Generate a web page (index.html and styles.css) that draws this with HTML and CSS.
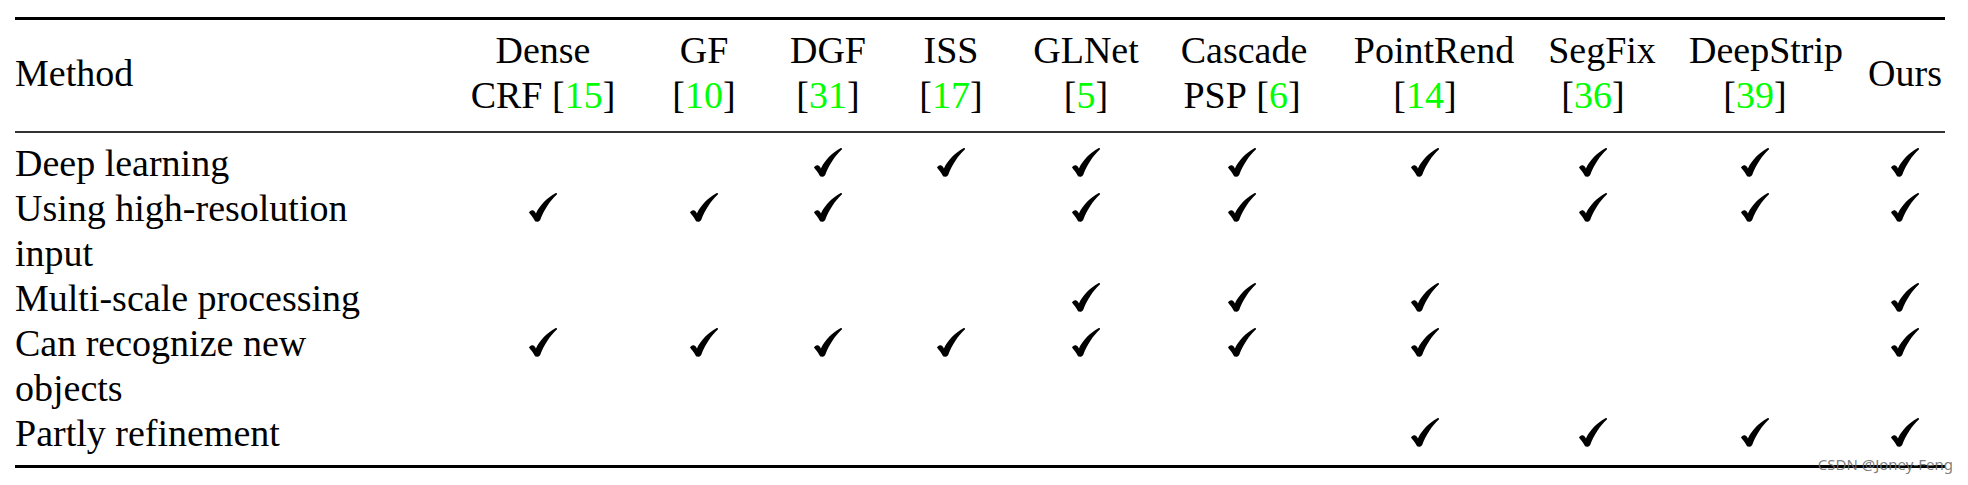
FILE: index.html
```html
<!DOCTYPE html>
<html>
<head>
<meta charset="utf-8">
<link rel="stylesheet" href="styles.css">
</head>
<body>
<svg width="0" height="0" class="defs">
  <defs>
    <path id="ck" d="M0 19.6 C1 16.8 4.4 16.2 6 18.8 L6.9 20.4 C11 12.5 17.5 5.2 26.8 0.1 C27.8 -0.3 28.4 0.8 27.8 1.5 C21 8 15.2 16.5 11.4 26.4 C10.4 29 6.8 29.6 5.6 27.6 C4 24.6 2 22.2 0 19.6 Z"/>
  </defs>
</svg>
<div class="page">
  <table class="cmp">
    <colgroup>
      <col class="w-method"><col class="w228"><col class="w94"><col class="w154"><col class="w92"><col class="w178"><col class="w134"><col class="w232"><col class="w104"><col class="w220"><col class="w80">
    </colgroup>
    <thead>
      <tr>
        <th class="lab-h">Method</th>
        <th><div class="ln">Dense</div><div class="ln">CRF&nbsp;[<span class="ref">15</span>]</div></th>
        <th><div class="ln">GF</div><div class="ln">[<span class="ref">10</span>]</div></th>
        <th><div class="ln">DGF</div><div class="ln">[<span class="ref">31</span>]</div></th>
        <th><div class="ln">ISS</div><div class="ln">[<span class="ref">17</span>]</div></th>
        <th><div class="ln">GLNet</div><div class="ln">[<span class="ref">5</span>]</div></th>
        <th><div class="ln sh-s">Cascade</div><div class="ln">PSP&nbsp;[<span class="ref">6</span>]</div></th>
        <th><div class="ln sh">PointRend</div><div class="ln">[<span class="ref">14</span>]</div></th>
        <th><div class="ln sh">SegFix</div><div class="ln">[<span class="ref">36</span>]</div></th>
        <th><div class="ln sh-l">DeepStrip</div><div class="ln">[<span class="ref">39</span>]</div></th>
        <th><div class="ln">Ours</div></th>
      </tr>
    </thead>
    <tbody>
      <tr>
        <td class="lab"><div class="lab-t">Deep learning</div></td>
        <td></td><td></td>
        <td><svg class="ck" viewBox="0 0 28 29"><use href="#ck"/></svg></td>
        <td><svg class="ck" viewBox="0 0 28 29"><use href="#ck"/></svg></td>
        <td><svg class="ck" viewBox="0 0 28 29"><use href="#ck"/></svg></td>
        <td><svg class="ck" viewBox="0 0 28 29"><use href="#ck"/></svg></td>
        <td><svg class="ck" viewBox="0 0 28 29"><use href="#ck"/></svg></td>
        <td><svg class="ck" viewBox="0 0 28 29"><use href="#ck"/></svg></td>
        <td><svg class="ck" viewBox="0 0 28 29"><use href="#ck"/></svg></td>
        <td><svg class="ck" viewBox="0 0 28 29"><use href="#ck"/></svg></td>
      </tr>
      <tr>
        <td class="lab"><div class="lab-t">Using high-resolution input</div></td>
        <td><svg class="ck" viewBox="0 0 28 29"><use href="#ck"/></svg></td>
        <td><svg class="ck" viewBox="0 0 28 29"><use href="#ck"/></svg></td>
        <td><svg class="ck" viewBox="0 0 28 29"><use href="#ck"/></svg></td>
        <td></td>
        <td><svg class="ck" viewBox="0 0 28 29"><use href="#ck"/></svg></td>
        <td><svg class="ck" viewBox="0 0 28 29"><use href="#ck"/></svg></td>
        <td></td>
        <td><svg class="ck" viewBox="0 0 28 29"><use href="#ck"/></svg></td>
        <td><svg class="ck" viewBox="0 0 28 29"><use href="#ck"/></svg></td>
        <td><svg class="ck" viewBox="0 0 28 29"><use href="#ck"/></svg></td>
      </tr>
      <tr>
        <td class="lab"><div class="lab-t">Multi-scale processing</div></td>
        <td></td><td></td><td></td><td></td>
        <td><svg class="ck" viewBox="0 0 28 29"><use href="#ck"/></svg></td>
        <td><svg class="ck" viewBox="0 0 28 29"><use href="#ck"/></svg></td>
        <td><svg class="ck" viewBox="0 0 28 29"><use href="#ck"/></svg></td>
        <td></td><td></td>
        <td><svg class="ck" viewBox="0 0 28 29"><use href="#ck"/></svg></td>
      </tr>
      <tr>
        <td class="lab"><div class="lab-t">Can recognize new objects</div></td>
        <td><svg class="ck" viewBox="0 0 28 29"><use href="#ck"/></svg></td>
        <td><svg class="ck" viewBox="0 0 28 29"><use href="#ck"/></svg></td>
        <td><svg class="ck" viewBox="0 0 28 29"><use href="#ck"/></svg></td>
        <td><svg class="ck" viewBox="0 0 28 29"><use href="#ck"/></svg></td>
        <td><svg class="ck" viewBox="0 0 28 29"><use href="#ck"/></svg></td>
        <td><svg class="ck" viewBox="0 0 28 29"><use href="#ck"/></svg></td>
        <td><svg class="ck" viewBox="0 0 28 29"><use href="#ck"/></svg></td>
        <td></td><td></td>
        <td><svg class="ck" viewBox="0 0 28 29"><use href="#ck"/></svg></td>
      </tr>
      <tr>
        <td class="lab"><div class="lab-t">Partly refinement</div></td>
        <td></td><td></td><td></td><td></td><td></td><td></td>
        <td><svg class="ck" viewBox="0 0 28 29"><use href="#ck"/></svg></td>
        <td><svg class="ck" viewBox="0 0 28 29"><use href="#ck"/></svg></td>
        <td><svg class="ck" viewBox="0 0 28 29"><use href="#ck"/></svg></td>
        <td><svg class="ck" viewBox="0 0 28 29"><use href="#ck"/></svg></td>
      </tr>
    </tbody>
  </table>
  <div class="wm">CSDN @Joney-Feng</div>
</div>
</body>
</html>
```
FILE: styles.css
```css
html, body {
  margin: 0;
  padding: 0;
  background: #fff;
}
body {
  font-family: "Liberation Serif", "Times New Roman", serif;
  font-size: 38px;
  color: #000;
}
.defs {
  position: absolute;
  width: 0;
  height: 0;
}
.page {
  position: relative;
  width: 1968px;
  height: 485px;
  padding-top: 17px;
  box-sizing: border-box;
}
.cmp {
  margin-left: 15px;
  width: 1930px;
  table-layout: fixed;
  border-collapse: separate;
  border-spacing: 0;
}
.w-method { width: 414px; }
.w228 { width: 228px; }
.w94 { width: 94px; }
.w154 { width: 154px; }
.w92 { width: 92px; }
.w178 { width: 178px; }
.w134 { width: 134px; }
.w232 { width: 232px; }
.w104 { width: 104px; }
.w220 { width: 220px; }
.w80 { width: 80px; }

.cmp th {
  font-weight: normal;
  line-height: 45px;
  padding: 8px 0 13px 0;
  border-top: 3px solid #000;
  border-bottom: 2px solid #333;
  vertical-align: middle;
  text-align: center;
}
.cmp th.lab-h {
  text-align: left;
}
.ln {
  display: flex;
  justify-content: center;
  white-space: nowrap;
}
.ln.sh { padding-left: 18px; }
.ln.sh-l { padding-left: 22px; }
.ln.sh-s { padding-left: 4px; }
.ref { color: #00ff00; }

.cmp td {
  padding: 0;
  line-height: 45px;
  vertical-align: top;
  text-align: center;
}
.cmp td.lab {
  text-align: left;
}
.lab-t {
  width: 364px;
}
.cmp tbody tr:first-child td {
  padding-top: 8px;
}
.cmp tbody tr:last-child td {
  padding-bottom: 9px;
  border-bottom: 3px solid #000;
}
.ck {
  display: inline-block;
  width: 28px;
  height: 29px;
  vertical-align: -1px;
  fill: #000;
}
.wm {
  position: absolute;
  right: 15px;
  top: 455px;
  font-family: "Noto Sans", "DejaVu Sans", sans-serif;
  font-size: 15px;
  line-height: 18px;
  color: rgba(110, 110, 110, 0.9);
}
```
